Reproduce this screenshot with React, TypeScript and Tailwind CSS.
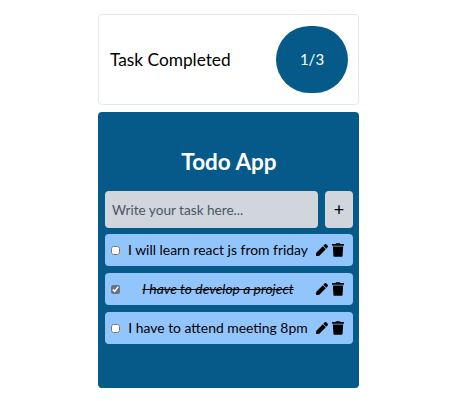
import React from 'react';
import { FaPen, FaTrash } from 'react-icons/fa';

const tasks = [
  { text: 'I will learn react js from friday', done: false },
  { text: 'I have to develop a project', done: true },
  { text: 'I have to attend meeting 8pm', done: false },
];

export default function App() {
  return (
    <div className="min-h-[401px] bg-white pt-[14px] font-['Lato','Open_Sans',sans-serif] text-black">
      <div className="ml-[98px] flex w-[261px] flex-col gap-[7px]">
        <div className="flex h-[91px] items-center justify-between rounded border border-gray-200 pl-[11px] pr-[10px]">
          <span className="text-[17.3px]">Task Completed</span>
          <div className="flex h-[67px] w-[72px] items-center justify-center rounded-full bg-[#055a8a] text-[15px] text-white">1/3</div>
        </div>

        <div className="flex h-[276px] flex-col rounded bg-[#055a8a] pl-[7px] pr-[6px] pt-[35px]">
          <h1 className="text-center text-[22.5px] leading-[30px] font-bold text-white">Todo App</h1>
          <div className="mt-[14px] flex gap-[7px]">
            <input
              placeholder="Write your task here..."
              className="h-[37px] w-[213px] rounded bg-gray-300 px-[7px] text-[13.6px] outline-none placeholder:text-gray-600"
            />
            <button className="flex h-[37px] w-[28px] items-center justify-center rounded bg-gray-300 text-[18px]">+</button>
          </div>
          <div className="mt-[6px] flex flex-col gap-[7px]">
            {tasks.map(t => (
              <div key={t.text} className="flex h-[32px] items-center rounded bg-[#93c5fd] pl-[6px] pr-[9px]">
                <input type="checkbox" defaultChecked={t.done} className="h-[9px] w-[9px] shrink-0 accent-gray-500" />
                <span className={`min-w-0 flex-1 pt-px text-center text-[13.9px] whitespace-nowrap ${t.done ? 'italic line-through' : ''}`}>{t.text}</span>
                <div className="flex shrink-0 items-center gap-[4px]">
                  <FaPen className="h-[12px] w-[12px]" />
                  <FaTrash className="h-[14px] w-[12px]" />
                </div>
              </div>
            ))}
          </div>
        </div>
      </div>
    </div>
  );
}
